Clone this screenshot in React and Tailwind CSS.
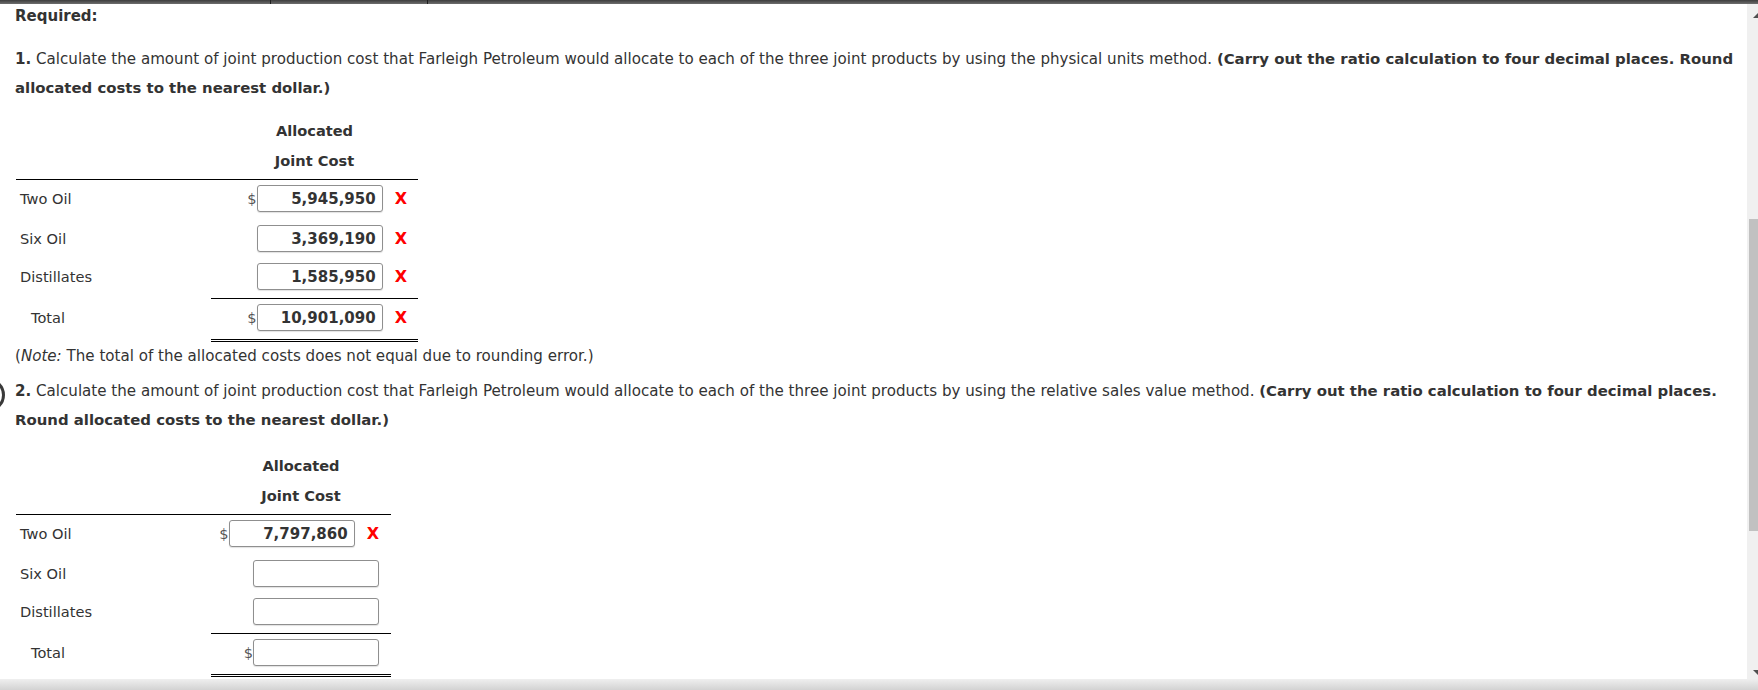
import React from "react";

const Amount = ({ value, dollar, wrong }) => (
    <div className="flex items-center">
        {dollar && <span className="text-[#555]">$</span>}
        <input
            readOnly
            value={value || ""}
            className="w-[126px] h-[27px] border border-[#8f8f8f] rounded-[3px] bg-white text-right pr-[6px] font-bold text-[15px] text-[#333] shadow-[0_1px_1px_rgba(0,0,0,0.12)] outline-none"
        />
        {wrong && <span className="ml-[12px] font-bold text-[16px] leading-none text-[#ff0000]">X</span>}
    </div>
);

function CostTable({ rows, total, colWidth, padRight }) {
    return (
        <div className="ml-[1px] w-fit">
            <div className="flex border-b border-black">
                <div className="w-[195px]" />
                <div
                    className="text-center font-bold leading-[30px] pb-[3px]"
                    style={{ width: colWidth }}
                >
                    <div>Allocated</div>
                    <div>Joint Cost</div>
                </div>
            </div>
            {rows.map((row, i) => (
                <div key={row.label} className="flex items-baseline">
                    <div className="w-[195px] pl-[4px]">{row.label}</div>
                    <div
                        className={`flex justify-end ${
                            i === rows.length - 1
                                ? "pt-[3px] pb-[8px] border-b border-black"
                                : "pt-[5px] pb-[8px]"
                        }`}
                        style={{ width: colWidth, paddingRight: padRight }}
                    >
                        <Amount value={row.value} dollar={row.dollar} wrong={row.wrong} />
                    </div>
                </div>
            ))}
            <div className="flex items-baseline">
                <div className="w-[195px] pl-[15px]">Total</div>
                <div
                    className="flex justify-end pt-[5px] pb-[8px] border-b-[3px] border-double border-black"
                    style={{ width: colWidth, paddingRight: padRight }}
                >
                    <Amount value={total.value} dollar wrong={total.wrong} />
                </div>
            </div>
        </div>
    );
}

export default function App() {
    const table1 = [
        { label: "Two Oil", value: "5,945,950", dollar: true, wrong: true },
        { label: "Six Oil", value: "3,369,190", wrong: true },
        { label: "Distillates", value: "1,585,950", wrong: true },
    ];
    const table2 = [
        { label: "Two Oil", value: "7,797,860", dollar: true, wrong: true },
        { label: "Six Oil" },
        { label: "Distillates" },
    ];

    return (
        <div className="w-[1758px] h-[690px] overflow-hidden flex flex-col bg-white text-[#333] text-[14.6px] font-['DejaVu_Sans',Verdana,sans-serif]">
            {/* window top edge */}
            <div className="h-[4px] flex bg-gradient-to-b from-[#3d3d3d] to-[#6e6e6e]">
                <div className="w-[270px]" />
                <div className="w-[157px] border-l border-[#1e1e1e]" />
                <div className="flex-1 border-l border-[#1e1e1e]" />
            </div>

            <div className="flex-1 flex min-h-0">
                <div className="relative flex-1 pl-[15px] overflow-hidden">
                    <div className="font-bold text-[15px] leading-[24px]">Required:</div>

                    <p className="mt-[17px] text-[15.1px] leading-[29px] whitespace-nowrap">
                        <b>1.</b> Calculate the amount of joint production cost that Farleigh Petroleum would allocate to each of the three joint products by using the physical units method.{" "}
                        <b className="text-[14.9px]">
                            (Carry out the ratio calculation to four decimal places. Round
                            <br />
                            allocated costs to the nearest dollar.)
                        </b>
                    </p>

                    <div className="mt-[13px]">
                        <CostTable
                            rows={table1}
                            total={{ value: "10,901,090", wrong: true }}
                            colWidth={207}
                            padRight={11}
                        />
                    </div>

                    <p className="text-[15.1px] leading-[29px]">
                        (<i>Note:</i> The total of the allocated costs does not equal due to rounding error.)
                    </p>

                    <p className="mt-[6px] text-[15.1px] leading-[29px] whitespace-nowrap">
                        <b>2.</b> Calculate the amount of joint production cost that Farleigh Petroleum would allocate to each of the three joint products by using the relative sales value method.{" "}
                        <b className="text-[14.9px]">
                            (Carry out the ratio calculation to four decimal places.
                            <br />
                            Round allocated costs to the nearest dollar.)
                        </b>
                    </p>

                    <div className="mt-[16px]">
                        <CostTable rows={table2} total={{}} colWidth={180} padRight={12} />
                    </div>

                    {/* edge of the step marker */}
                    <div className="absolute left-[-29px] top-[374px] w-[34px] h-[34px] rounded-full border-[3px] border-[#3a3a3a]" />
                </div>

                {/* scrollbar */}
                <div className="w-[11px] bg-[#f0f0f0] flex flex-col">
                    <svg className="mt-[9px]" width="11" height="5" viewBox="0 0 11 5">
                        <polygon points="11,0 6,5 11,5" fill="#505050" />
                    </svg>
                    <div className="mt-[201px] ml-[2px] w-[9px] h-[312px] bg-[#c1c1c1]" />
                    <svg className="mt-[139px]" width="11" height="5" viewBox="0 0 11 5">
                        <polygon points="6,0 11,0 11,5" fill="#505050" />
                    </svg>
                </div>
            </div>

            <div className="h-[11px] bg-gradient-to-b from-[#efefef] to-[#d3d3d3]" />
        </div>
    );
}
